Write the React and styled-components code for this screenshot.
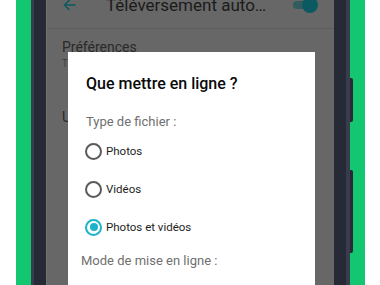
import React from "react";
import styled, { createGlobalStyle } from "styled-components";

const Global = createGlobalStyle`
  html, body { margin: 0; padding: 0; background: #ffffff; }
  body { font-family: Roboto, "Noto Sans", sans-serif; }
`;

const Canvas = styled.div`
  width: 380px;
  height: 285px;
  overflow: hidden;
  display: flex;
  box-sizing: border-box;
  padding: 0 15px 0 16px;
  background: #ffffff;
`;

const Backdrop = styled.div`
  flex: 1;
  display: flex;
  padding: 0 15px;
  background: #12c76f;
`;

const Phone = styled.div`
  flex: 1;
  position: relative;
  display: flex;
  background: #262a36;
  border-left: 3px solid #393c4c;
  border-right: 4px solid #393c4c;
  padding: 0 12px;
`;

const SideButton = styled.div`
  position: absolute;
  right: -7px;
  width: 3px;
  top: ${(p) => p.$top}px;
  height: ${(p) => p.$h}px;
  background: #2c2638;
  border-radius: 0 2px 2px 0;
`;

const Screen = styled.div`
  flex: 1;
  position: relative;
  overflow: hidden;
  display: flex;
  flex-direction: column;
  background: #676767;
  border-left: 1px solid #727272;
`;

const AppBar = styled.div`
  margin-top: -18px;
  height: 46px;
  display: flex;
  align-items: center;
  padding: 0 16px 0 16px;
  border-bottom: 1px solid #5d5d5d;
  flex-shrink: 0;
`;

const Title = styled.div`
  margin-left: 30px;
  font-size: 17px;
  color: #1b1b1b;
  white-space: nowrap;
`;

const Toggle = styled.div`
  margin-left: auto;
  position: relative;
  width: 25px;
  height: 16px;
`;

const Track = styled.div`
  position: absolute;
  left: 0;
  top: 4px;
  width: 18px;
  height: 8px;
  border-radius: 4px;
  background: #335c5e;
`;

const Thumb = styled.div`
  position: absolute;
  right: 0;
  top: 0;
  width: 16px;
  height: 16px;
  border-radius: 50%;
  background: #0c5a61;
`;

const List = styled.div`
  display: flex;
  flex-direction: column;
  padding-left: 15px;
`;

const ItemTitle = styled.div`
  font-size: 14px;
  line-height: 16px;
  color: #2a2a2a;
  margin-top: ${(p) => p.$mt || 0}px;
`;

const ItemSub = styled.div`
  font-size: 10px;
  line-height: 12px;
  color: #3e3e3e;
  margin-top: 3px;
`;

const Dialog = styled.div`
  position: absolute;
  left: 21px;
  top: 52px;
  width: 247px;
  height: 260px;
  background: #ffffff;
  display: flex;
  flex-direction: column;
  padding-top: 22px;
  box-sizing: border-box;
`;

const DialogTitle = styled.div`
  padding-left: 18px;
  font-size: 16px;
  font-weight: 500;
  line-height: 19px;
  color: #0a0a0a;
`;

const Section = styled.div`
  padding-left: ${(p) => p.$pl}px;
  margin-top: ${(p) => p.$mt}px;
  font-size: 13px;
  line-height: 20px;
  color: #6f6f6f;
`;

const RadioRow = styled.div`
  height: 38px;
  display: flex;
  align-items: center;
  padding-left: 17px;
`;

const Circle = styled.div`
  width: 17px;
  height: 17px;
  box-sizing: border-box;
  border-radius: 50%;
  border: 2px solid ${(p) => (p.$on ? "#1cb3c9" : "#5a5a5a")};
  display: flex;
  align-items: center;
  justify-content: center;
  flex-shrink: 0;
`;

const Dot = styled.div`
  width: 8px;
  height: 8px;
  border-radius: 50%;
  background: #1cb3c9;
`;

const RadioLabel = styled.div`
  margin-left: 4px;
  font-size: 11.5px;
  color: #1e1e1e;
`;

const BackArrow = () => (
  <svg width="13" height="12" viewBox="0 0 13 12" fill="none">
    <path d="M12.5 6H1.5M6.5 1L1.5 6L6.5 11" stroke="#0d5a60" strokeWidth="1.6" />
  </svg>
);

const Radio = ({ on, label }) => (
  <RadioRow>
    <Circle $on={on}>{on && <Dot />}</Circle>
    <RadioLabel>{label}</RadioLabel>
  </RadioRow>
);

export default function App() {
  return (
    <>
      <Global />
      <Canvas>
        <Backdrop>
          <Phone>
            <SideButton $top={78} $h={44} />
            <SideButton $top={170} $h={83} />
            <Screen>
              <AppBar>
                <BackArrow />
                <Title>Téléversement auto…</Title>
                <Toggle>
                  <Track />
                  <Thumb />
                </Toggle>
              </AppBar>
              <List>
                <ItemTitle $mt={10}>Préférences</ItemTitle>
                <ItemSub>Téléverser uniquement en Wi-Fi</ItemSub>
                <ItemTitle $mt={39}>Utiliser les données mobiles</ItemTitle>
              </List>
              <Dialog>
                <DialogTitle>Que mettre en ligne ?</DialogTitle>
                <Section $pl={18} $mt={19}>Type de fichier :</Section>
                <Radio label="Photos" />
                <Radio label="Vidéos" />
                <Radio on label="Photos et vidéos" />
                <Section $pl={13} $mt={5}>Mode de mise en ligne :</Section>
              </Dialog>
            </Screen>
          </Phone>
        </Backdrop>
      </Canvas>
    </>
  );
}
